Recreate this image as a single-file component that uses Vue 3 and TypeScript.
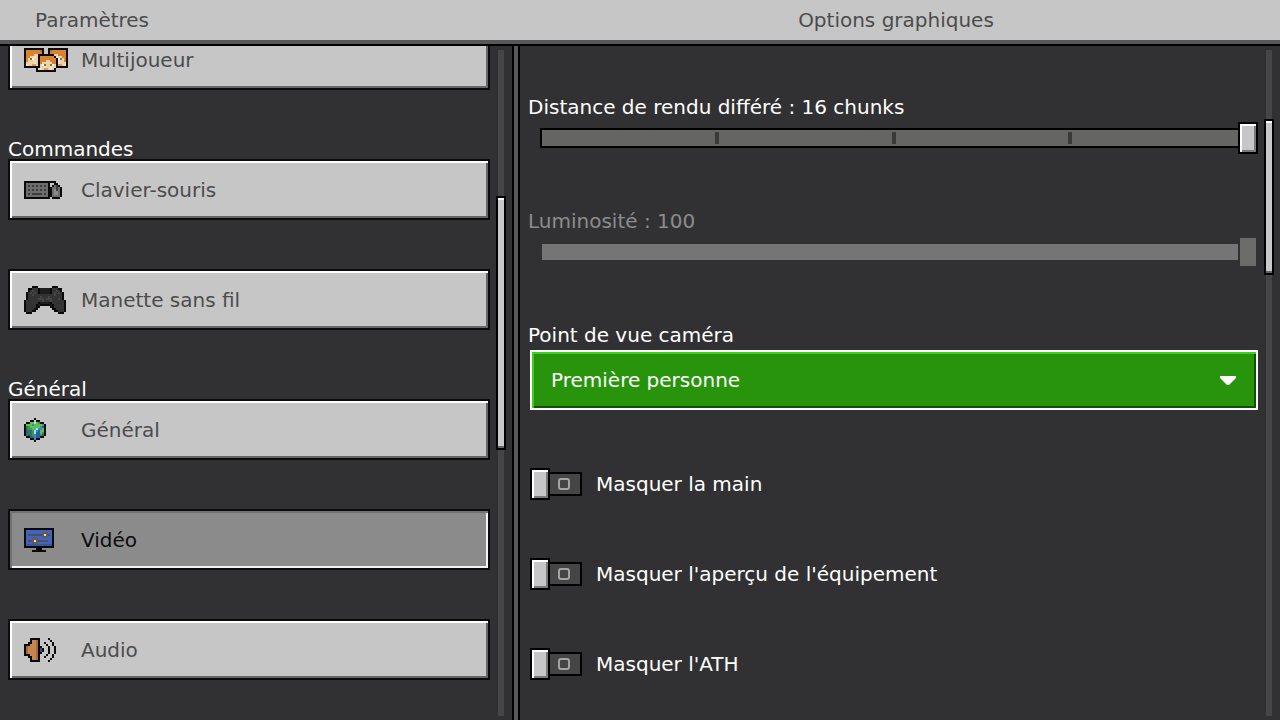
<script setup lang="ts">
import { ref } from 'vue'

type Cell = { x: number; y: number; w: number; fill: string }
type Icon = { w: number; h: number; cells: Cell[] }

const palette: Record<string, string> = {
  k: '#0a0a0a', o: '#d9822f', O: '#c06c22', s: '#f2cfa4', S: '#f8dfc2', g: '#4f8a34', w: '#ffffff', p: '#d99a7c',
  d: '#6d6d6d', D: '#3c3c3c', m: '#8a8a8a', c: '#333334', C: '#454546', n: '#1d1d1e',
  b: '#4264c0', B: '#38559f', l: '#4b4f5e', L: '#e8dfc4', y: '#5f5c55',
  t: '#c98550', T: '#a9683a', u: '#2d4f8f',
  G: '#5fc04a', e: '#3a9a3c', E: '#2b7a48', a: '#3c86c8', A: '#245fa6', i: '#a8dcec',
}

function pixels(rows: string[]): Icon {
  const cells: Cell[] = []
  rows.forEach((row, y) => {
    let x = 0
    while (x < row.length) {
      let end = x + 1
      while (end < row.length && row[end] === row[x]) end++
      const fill = palette[row[x]]
      if (fill) cells.push({ x, y, w: end - x, fill })
      x = end
    }
  })
  return { w: Math.max(...rows.map((r) => r.length)), h: rows.length, cells }
}

const faces = pixels([
  'kkkkkkkkkk..kkkkkkkkkk',
  'koooooooOk..kOoooooook',
  'kooooooook..kooooooook',
  'koooosskkkkkkkkssooook',
  'koossSskoooooookSssook',
  'kosgwsskooooooookwgsok',
  'kosssSskooossoookSssok',
  'kssssSskosssssookSsssk',
  'kSssppskswgssgwskppsSk',
  'kkkkkkkkssSssSsskkkkkk',
  '......ksSsppsSsk......',
  '......kkkkkkkkkk......',
])

const keyboard = pixels([
  'kkkkkkkkkkkkkkkk...',
  'kdddddddddddk..kk..',
  'kdDdDdDdDdDdk.kdDk.',
  'kdddddddddddkkddDdk',
  'kdDdDdDdDdDdkkdmDdk',
  'kdddddddddddkkdmmdk',
  'kdDdDDDDDdDdkkdmmdk',
  'kdddddddddddkkddddk',
  'kkkkkkkkkkkkk.kkkk.',
])

const gamepad = pixels([
  '....kkk.......kkk....',
  '..kkcccknnnnnkccckk..',
  '..kcCccknnnnnkccCck..',
  '.kcCcCcknnnnnkcCcCck.',
  '.kccCccccccccccCccck.',
  '.kccccccCcccCcccccck.',
  '.kcccccCCCcCCCcccCck.',
  'kccccccccCcccCcccccck',
  'kccccccknnnnnkcccccck',
  'kcccccknkkkkknkccccck',
  'kccccckk.....kkccccck',
  'kcccckk.......kkcccck',
  'kccckk.........kkccck',
  '.kkk.............kkk.',
])

const globe = pixels([
  '.....k.....',
  '...kkikk...',
  '.kkGGiGekk.',
  'kGGGaGGGGak',
  'kEeGGGGGaAk',
  'kEeaGGiaaGk',
  'kAEEaiaAGGk',
  'kAEEeiAAGek',
  'kEAEeaAAeAk',
  '.kkAEaAAkk.',
  '...kkakk...',
  '.....k.....',
])

const monitor = pixels([
  'kkkkkkkkkkkkkkk',
  'kbbbbbbbbbbbbbk',
  'kbbbbbbbbyyybbk',
  'kblllllllyLylbk',
  'kbbbbbbbbyyybbk',
  'kbbbyyybbbbbbbk',
  'kbllyLylllllbbk',
  'kbbbyyybbbbbbbk',
  'kBBBBBBBBBBBBBk',
  'kkkkkkkkkkkkkkk',
  '......kkk......',
  '....kkkkkkk....',
])

const speaker = pixels([
  '...kkkkk....k...',
  '...kttTk.....k..',
  '..kkttTk..k...k.',
  'kkktttTk...k..k.',
  'kTttttTkk...k..k',
  'kTttttTkuk..k..k',
  'kTttttTkuk..k..k',
  'kTttttTkk...k..k',
  'kkktttTk...k..k.',
  '..kkttTk..k...k.',
  '...kttTk.....k..',
  '...kkkkk....k...',
])

const groups = [
  { title: '', items: [{ label: 'Multijoueur', icon: faces }] },
  {
    title: 'Commandes',
    items: [
      { label: 'Clavier-souris', icon: keyboard },
      { label: 'Manette sans fil', icon: gamepad },
    ],
  },
  {
    title: 'Général',
    items: [
      { label: 'Général', icon: globe },
      { label: 'Vidéo', icon: monitor },
      { label: 'Audio', icon: speaker },
    ],
  },
]

const selected = ref('Vidéo')
const distance = ref(16)
const brightness = ref(100)
const camera = ref('Première personne')
const toggles = ref([
  { id: 'hide-hand', label: 'Masquer la main', on: false },
  { id: 'hide-paperdoll', label: "Masquer l'aperçu de l'équipement", on: false },
  { id: 'hide-hud', label: "Masquer l'ATH", on: false },
])
</script>

<template>
  <div class="screen">
    <header class="topbar">
      <h1 class="title-left">Paramètres</h1>
      <h2 class="title-right">Options graphiques</h2>
    </header>
    <div class="panes">
      <nav class="sidebar">
        <div class="menu">
          <section v-for="group in groups" :key="group.title" class="group">
            <h3 v-if="group.title" class="group-title">{{ group.title }}</h3>
            <div class="items">
              <button
                v-for="item in group.items"
                :key="item.label"
                type="button"
                class="item"
                :class="{ active: item.label === selected }"
                @click="selected = item.label"
              >
                <span class="slot">
                  <svg
                    :width="item.icon.w * 2"
                    :height="item.icon.h * 2"
                    :viewBox="`0 0 ${item.icon.w} ${item.icon.h}`"
                    shape-rendering="crispEdges"
                    aria-hidden="true"
                  >
                    <rect
                      v-for="(c, i) in item.icon.cells"
                      :key="i"
                      :x="c.x"
                      :y="c.y"
                      :width="c.w"
                      height="1"
                      :fill="c.fill"
                    />
                  </svg>
                </span>
                <span>{{ item.label }}</span>
              </button>
            </div>
          </section>
        </div>
        <div class="scrollbar menu-bar"><div class="thumb"></div></div>
      </nav>
      <div class="divider"></div>
      <main class="content">
        <form class="options" @submit.prevent>
          <div class="field">
            <label for="distance">Distance de rendu différé : {{ distance }} chunks</label>
            <input id="distance" v-model.number="distance" class="slider stepped" type="range" min="0" max="16" step="4" />
          </div>
          <div class="field">
            <label for="brightness" class="muted">Luminosité : {{ brightness }}</label>
            <input id="brightness" v-model.number="brightness" class="slider" type="range" min="0" max="100" disabled />
          </div>
          <div class="field">
            <label for="camera">Point de vue caméra</label>
            <div class="dropdown">
              <select id="camera" v-model="camera">
                <option>Première personne</option>
              </select>
              <svg class="arrow" width="16" height="10" viewBox="0 0 16 10" aria-hidden="true">
                <path d="M0 1H16V3L9 10H7L0 3Z" fill="#fff" />
              </svg>
            </div>
          </div>
          <div class="toggles">
            <label v-for="t in toggles" :key="t.id" class="toggle" :for="t.id">
              <input :id="t.id" v-model="t.on" type="checkbox" />
              <span class="switch"><span class="knob"></span><span class="track"><span class="ring"></span></span></span>
              <span>{{ t.label }}</span>
            </label>
          </div>
        </form>
        <div class="scrollbar content-bar"><div class="thumb"></div></div>
      </main>
    </div>
  </div>
</template>

<style>
body {
  margin: 0;
  background: #313133;
}
</style>

<style scoped>
.screen {
  display: flex;
  flex-direction: column;
  height: 100vh;
  overflow: hidden;
  background: #313133;
  color: #fff;
  font-family: 'DejaVu Sans', sans-serif;
  font-size: 20px;
  line-height: 20px;
}
.screen * {
  box-sizing: border-box;
}
h1,
h2,
h3 {
  margin: 0;
  font-size: 20px;
  font-weight: 400;
}
.topbar {
  display: flex;
  flex: none;
  align-items: center;
  height: 46px;
  background: #c6c6c6;
  color: #4c4c4c;
  border-bottom: 2px solid #000;
  box-shadow: inset 0 -4px #58585a;
  padding-bottom: 4px;
}
.title-left {
  flex: 0 0 40%;
  padding-left: 35px;
}
.title-right {
  flex: 1;
  text-align: center;
}
.panes {
  display: flex;
  flex: 1;
  min-height: 0;
}
.sidebar {
  display: flex;
  flex: 0 0 40%;
  overflow: hidden;
  padding: 0 6px 0 8px;
}
.menu {
  display: flex;
  flex: 1;
  flex-direction: column;
  gap: 49px;
  margin-top: -17px;
}
.items {
  display: flex;
  flex-direction: column;
  gap: 49px;
}
.item {
  display: flex;
  align-items: center;
  width: 100%;
  height: 61px;
  padding: 0 14px;
  border: 2px solid #0b0b0c;
  background: #c6c6c6;
  box-shadow: inset 2px 2px #fff, inset -2px -2px #656566;
  color: #4c4c4c;
  font: inherit;
  text-align: left;
}
.item.active {
  background: #8b8b8b;
  box-shadow: inset 2px 2px #727272, inset -2px -2px #f2f2f2;
  color: #0c0c0c;
}
.slot {
  display: flex;
  flex: 0 0 57px;
}
.divider {
  flex: none;
  width: 8px;
  background: #58585a;
  border: solid #000;
  border-width: 0 2px;
}
.scrollbar {
  flex: none;
  width: 10px;
  margin: 4px 0;
  background: linear-gradient(#454547, #454547) center / 6px 100% no-repeat;
}
.thumb {
  border: 2px solid #000;
  background: #c8c8ca;
  box-shadow: inset 0 2px #fff, inset 0 -2px #656566;
}
.menu-bar {
  margin-left: 6px;
  padding-top: 146px;
}
.menu-bar .thumb {
  height: 254px;
}
.content-bar {
  margin-left: 6px;
  padding-top: 69px;
}
.content-bar .thumb {
  height: 156px;
}
.content {
  display: flex;
  flex: 1;
  min-width: 0;
  overflow: hidden;
  padding: 0 6px 0 10px;
}
.options {
  flex: 1;
  min-width: 0;
  display: flex;
  flex-direction: column;
  gap: 52px;
  padding-top: 46px;
}
.field {
  display: flex;
  flex-direction: column;
}
.field label {
  line-height: 30px;
  margin-left: -2px;
}
.muted {
  color: #8c8c8c;
}
.slider {
  appearance: none;
  height: 32px;
  margin: 0 0 0 10px;
  background: none;
}
.slider::-webkit-slider-runnable-track {
  height: 20px;
  background: #656563;
  box-shadow: inset 0 0 0 2px #000;
}
.stepped::-webkit-slider-runnable-track {
  background:
    linear-gradient(#3a3a3b, #3a3a3b) 24.5% 50% / 4px 12px no-repeat,
    linear-gradient(#3a3a3b, #3a3a3b) 49.3% 50% / 4px 12px no-repeat,
    linear-gradient(#3a3a3b, #3a3a3b) 74% 50% / 4px 12px no-repeat,
    #656563;
}
.slider::-webkit-slider-thumb {
  appearance: none;
  box-sizing: border-box;
  width: 20px;
  height: 32px;
  margin-top: -6px;
  border: 2px solid #000;
  background: #c6c6c8;
  box-shadow: inset 2px 2px #fff, inset -2px -2px #7a7a7b;
}
.slider:disabled::-webkit-slider-runnable-track {
  background: #757575;
  box-shadow: inset 0 0 0 2px #313133;
}
.slider:disabled::-webkit-slider-thumb {
  border-color: #313133;
  background: #6c6c6b;
  box-shadow: none;
}
.dropdown {
  display: grid;
  align-items: center;
}
.dropdown select,
.arrow {
  grid-area: 1 / 1;
}
.dropdown select {
  appearance: none;
  width: 100%;
  height: 60px;
  padding: 0 19px;
  border: 2px solid #fff;
  border-radius: 0;
  outline: none;
  background: #27940b;
  box-shadow: inset 2px 2px #3bd021, inset -2px -2px #0f5005;
  color: #fff;
  font: inherit;
}
.arrow {
  justify-self: end;
  margin-right: 22px;
  pointer-events: none;
}
.toggles {
  display: flex;
  flex-direction: column;
  gap: 58px;
  margin-top: 6px;
}
.toggle {
  display: flex;
  align-items: center;
  gap: 14px;
}
.toggle input {
  position: absolute;
  opacity: 0;
  margin: 0;
}
.switch {
  display: flex;
  align-items: center;
}
.knob {
  width: 20px;
  height: 32px;
  border: 2px solid #000;
  background: #c6c6c8;
  box-shadow: inset 2px 2px #fff, inset -2px -2px #7a7a7b;
}
.track {
  display: flex;
  align-items: center;
  justify-content: center;
  width: 32px;
  height: 24px;
  border: 2px solid #000;
  border-left: 0;
  background: #454546;
}
.ring {
  width: 12px;
  height: 12px;
  margin-right: 2px;
  border: 2px solid #a4a4a4;
  border-radius: 3px;
}
.toggle input:checked + .switch {
  flex-direction: row-reverse;
}
</style>
